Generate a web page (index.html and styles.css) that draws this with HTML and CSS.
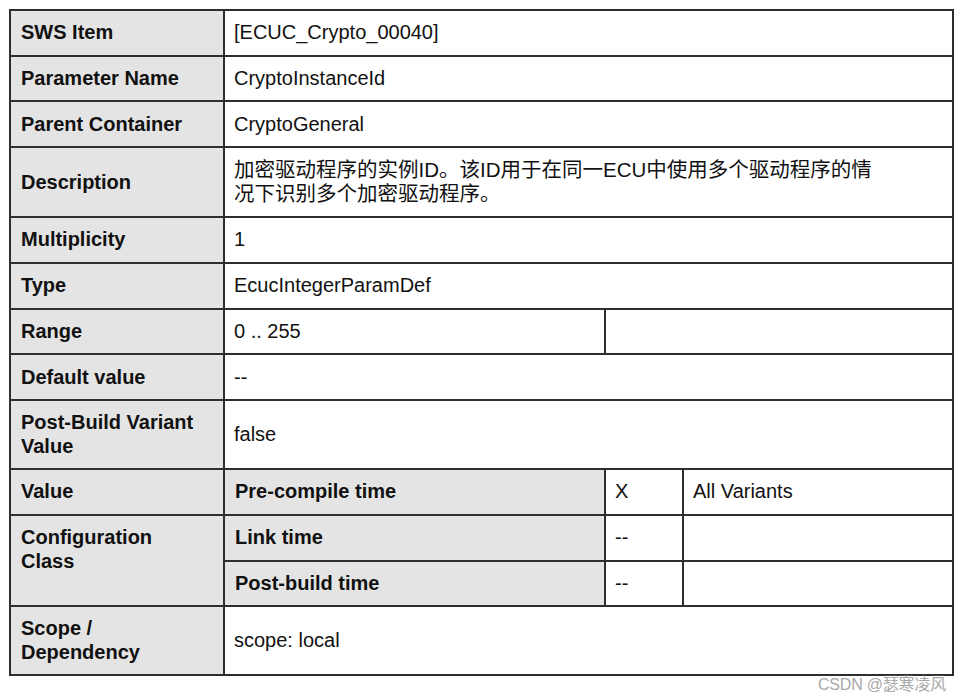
FILE: index.html
```html
<!DOCTYPE html>
<html>
<head>
<meta charset="utf-8">
<link rel="stylesheet" href="styles.css">
</head>
<body>
<div class="page">
<table class="spec">
  <colgroup>
    <col class="c1"><col class="c2"><col class="c3"><col class="c4">
  </colgroup>
  <tr><th>SWS Item</th><td colspan="3">[ECUC_Crypto_00040]</td></tr>
  <tr><th>Parameter Name</th><td colspan="3">CryptoInstanceId</td></tr>
  <tr><th>Parent Container</th><td colspan="3">CryptoGeneral</td></tr>
  <tr><th>Description</th><td colspan="3" class="cjk">加密驱动程序的实例ID。该ID用于在同一ECU中使用多个驱动程序的情<br>况下识别多个加密驱动程序。</td></tr>
  <tr><th>Multiplicity</th><td colspan="3">1</td></tr>
  <tr><th>Type</th><td colspan="3">EcucIntegerParamDef</td></tr>
  <tr><th>Range</th><td>0 .. 255</td><td colspan="2"></td></tr>
  <tr><th>Default value</th><td colspan="3">--</td></tr>
  <tr><th>Post-Build Variant<br>Value</th><td colspan="3">false</td></tr>
  <tr><th>Value</th><th>Pre-compile time</th><td>X</td><td>All Variants</td></tr>
  <tr><th rowspan="2" class="top">Configuration<br>Class</th><th>Link time</th><td>--</td><td></td></tr>
  <tr><th>Post-build time</th><td>--</td><td></td></tr>
  <tr><th>Scope /<br>Dependency</th><td colspan="3">scope: local</td></tr>
</table>
<div class="mark">CSDN @瑟寒凌风</div>
</div>
</body>
</html>
```
FILE: styles.css
```css
html, body {
  margin: 0;
  padding: 0;
  background: #ffffff;
}
.page {
  position: relative;
  padding: 9px 0 0 9px;
  width: 966px;
  height: 699px;
  box-sizing: border-box;
}
.spec {
  border-collapse: collapse;
  table-layout: fixed;
  width: 943px;
  font-family: "Liberation Sans", Arial, "Noto Sans CJK SC", sans-serif;
  font-size: 20px;
  line-height: 23.5px;
  color: #111;
}
.c1 { width: 214px; }
.c2 { width: 381px; }
.c3 { width: 78px; }
.c4 { width: 270px; }
.spec th, .spec td {
  border: 2px solid #2e2e2e;
  padding: 10.2px 10px 10px 10px;
  text-align: left;
  vertical-align: middle;
}
.spec td {
  padding-left: 9px;
  font-weight: normal;
}
.spec th {
  background: #e4e4e4;
  font-weight: bold;
}
.spec th.top {
  vertical-align: top;
}
.spec td.cjk {
  font-size: 20.5px;
  line-height: 24px;
}
.mark {
  position: absolute;
  right: 20px;
  top: 671px;
  font-family: "Liberation Sans Narrow", "Liberation Sans", "Noto Sans CJK SC", sans-serif;
  font-size: 16px;
  color: #a8a8a8;
  letter-spacing: -0.2px;
  text-shadow: 0 0 2px #fff, 0 0 2px #fff;
}
```
